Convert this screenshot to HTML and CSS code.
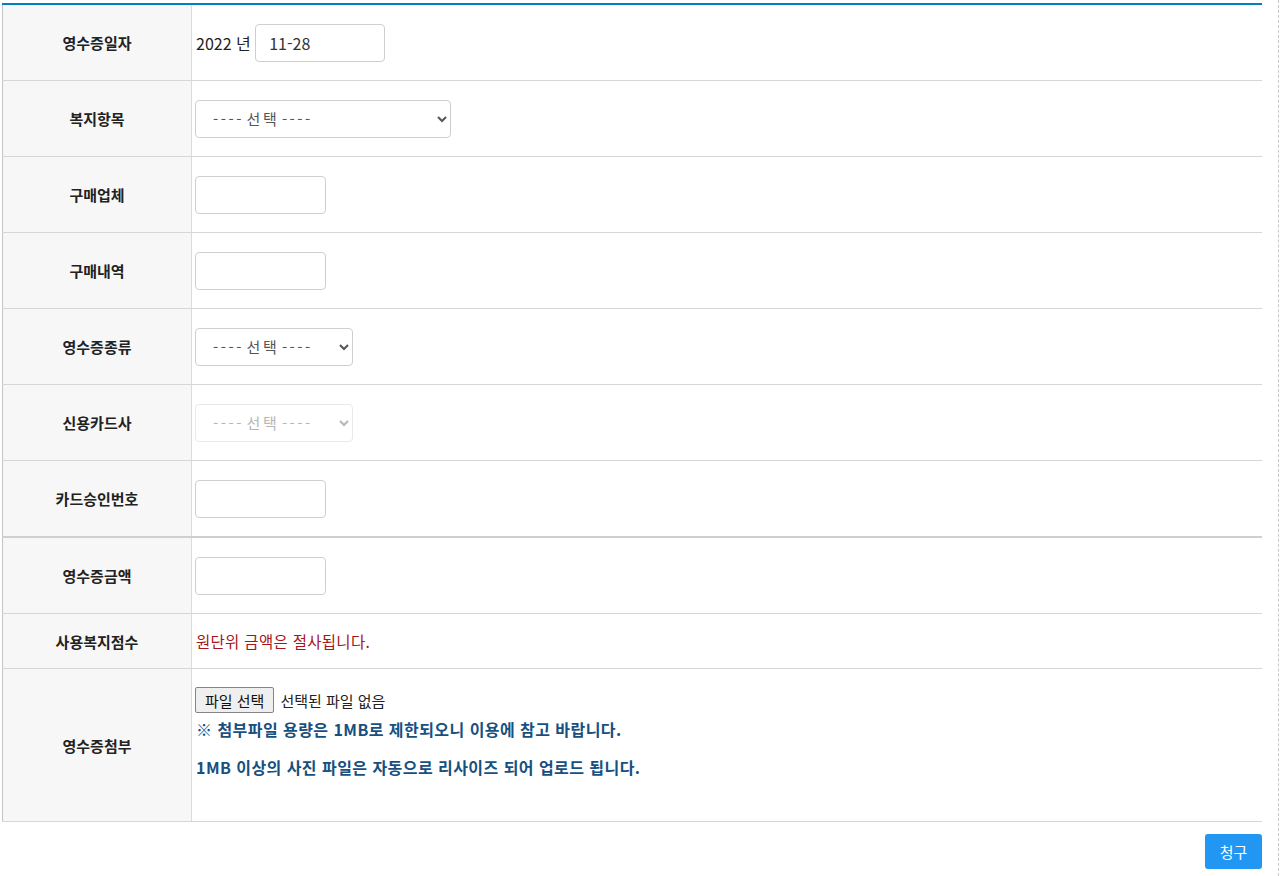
FILE: index.html
```html
<!DOCTYPE html>
<html lang="ko">
<head>
    <meta charset="UTF-8">
    <meta name="viewport" content="width=device-width, initial-scale=1.0">
    <title>복지포인트 청구</title>
    <link rel="stylesheet" href="styles.css">
</head>
<body>
    <div class="page">
        <form class="claim-form">
            <table class="form-table">
                <tr>
                    <th>영수증일자</th>
                    <td>
                        <span class="year">2022 년</span>
                        <input type="text" class="field date-field" value="11-28">
                    </td>
                </tr>
                <tr>
                    <th>복지항목</th>
                    <td>
                        <select class="field select-wide">
                            <option>---- 선택 ----</option>
                        </select>
                    </td>
                </tr>
                <tr>
                    <th>구매업체</th>
                    <td><input type="text" class="field text-field"></td>
                </tr>
                <tr>
                    <th>구매내역</th>
                    <td><input type="text" class="field text-field"></td>
                </tr>
                <tr>
                    <th>영수증종류</th>
                    <td>
                        <select class="field select-small">
                            <option>---- 선택 ----</option>
                        </select>
                    </td>
                </tr>
                <tr>
                    <th>신용카드사</th>
                    <td>
                        <select class="field select-small" disabled>
                            <option>---- 선택 ----</option>
                        </select>
                    </td>
                </tr>
                <tr class="row-split">
                    <th>카드승인번호</th>
                    <td><input type="text" class="field text-field"></td>
                </tr>
                <tr>
                    <th>영수증금액</th>
                    <td><input type="text" class="field text-field"></td>
                </tr>
                <tr class="row-short">
                    <th>사용복지점수</th>
                    <td><span class="warn">원단위 금액은 절사됩니다.</span></td>
                </tr>
                <tr class="row-tall">
                    <th>영수증첨부</th>
                    <td>
                        <div class="file-box">
                            <button type="button" class="file-btn">파일 선택</button>
                            <span class="file-name">선택된 파일 없음</span>
                        </div>
                        <p class="notice">※ 첨부파일 용량은 1MB로 제한되오니 이용에 참고 바랍니다.</p>
                        <p class="notice">1MB 이상의 사진 파일은 자동으로 리사이즈 되어 업로드 됩니다.</p>
                    </td>
                </tr>
            </table>
            <div class="actions">
                <button type="submit" class="btn-submit">청구</button>
            </div>
        </form>
    </div>
</body>
</html>
```

FILE: styles.css
```css
html, body {
    margin: 0;
    padding: 0;
    background: #fff;
}
body {
    font-family: "Noto Sans CJK KR", "Noto Sans", sans-serif;
    color: #222;
}
.page {
    width: 1279px;
    height: 876px;
    box-sizing: border-box;
    border-right: 1px dashed #c8c8c8;
    padding: 3px 0 0 2px;
}
.claim-form {
    width: 1260px;
}
.form-table {
    width: 1260px;
    border-collapse: collapse;
    border-top: 2px solid #0080c0;
    border-left: 1px solid #c4c4c4;
}
.form-table th,
.form-table td {
    height: 75px;
    padding: 0;
    border-bottom: 1px solid #d6d6d6;
}
.form-table th {
    width: 188px;
    background: #f7f7f7;
    border-right: 1px solid #dcdcdc;
    font-size: 15px;
    font-weight: bold;
    color: #222;
    text-align: center;
}
.form-table td {
    padding-left: 3px;
    text-align: left;
}
.row-split th,
.row-split td {
    border-bottom: 2px solid #cfcfcf;
}
.row-short th,
.row-short td {
    height: 54px;
}
.row-tall th,
.row-tall td {
    height: 152px;
}
.row-tall td {
    vertical-align: top;
    padding-top: 18px;
    box-sizing: border-box;
}
.year {
    font-size: 16px;
    color: #222;
    margin-left: 1px;
    vertical-align: middle;
}
.field {
    box-sizing: border-box;
    height: 38px;
    border: 1px solid #cfcfcf;
    border-radius: 4px;
    background: #fff;
    font-family: inherit;
    font-size: 15px;
    color: #333;
    vertical-align: middle;
}
.date-field {
    width: 130px;
    padding-left: 13px;
    font-size: 16px;
}
.text-field {
    width: 131px;
}
.select-wide,
.select-small {
    padding-left: 13px;
    color: #555;
    letter-spacing: 2.5px;
    word-spacing: -4px;
}
.select-wide {
    width: 256px;
}
.select-small {
    width: 158px;
}
.select-small:disabled {
    color: #999;
    background: #fff;
    border-color: #e0e0e0;
}
.warn {
    color: #a8141c;
    font-size: 15.5px;
    letter-spacing: 0.3px;
    margin-left: 1px;
}
.file-box {
    display: flex;
    align-items: center;
    gap: 6px;
}
.file-btn {
    height: 26px;
    padding: 0 9px;
    border: 1px solid #858585;
    border-radius: 2px;
    background: #efefef;
    font-family: inherit;
    font-size: 15px;
    color: #111;
}
.file-name {
    font-size: 15px;
    color: #222;
}
.notice {
    margin: 3px 0 0 1px;
    font-size: 16px;
    font-weight: bold;
    color: #17507f;
    line-height: 26px;
    letter-spacing: 0.45px;
}
.notice + .notice {
    margin-top: 12px;
}
.actions {
    display: flex;
    justify-content: flex-end;
    margin-top: 12px;
}
.btn-submit {
    width: 57px;
    height: 35px;
    border: none;
    border-radius: 3px;
    background: #2196f3;
    color: #fff;
    font-family: inherit;
    font-size: 15px;
    cursor: pointer;
}
```
